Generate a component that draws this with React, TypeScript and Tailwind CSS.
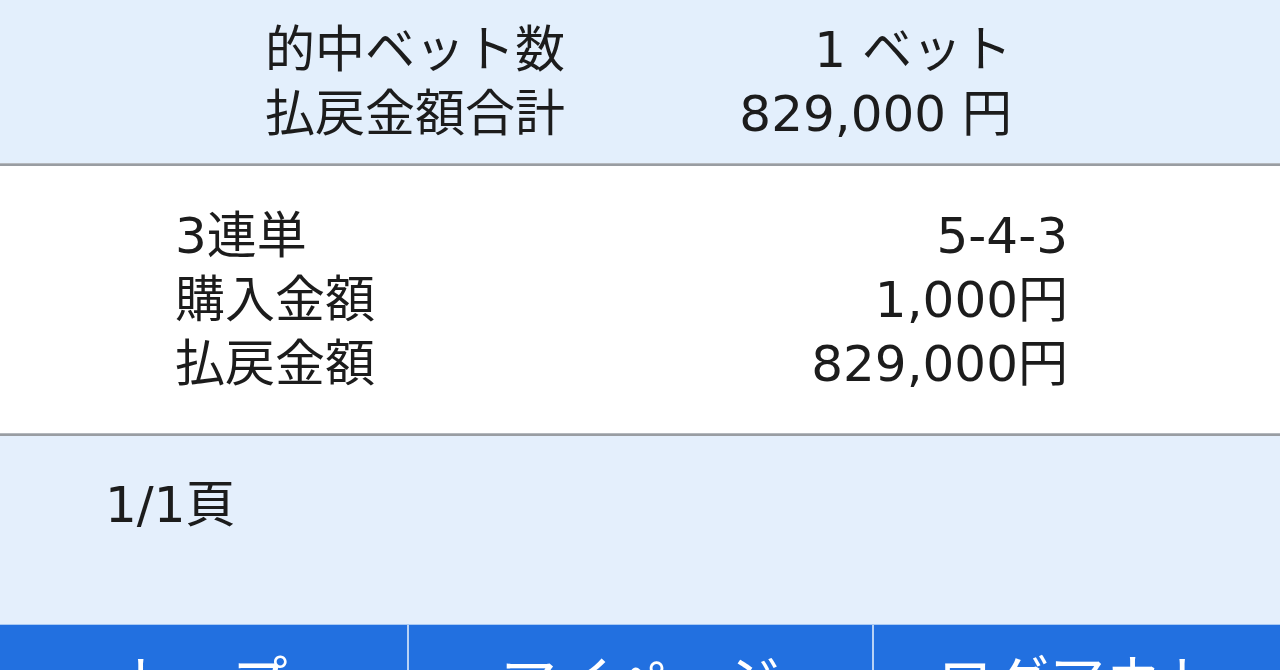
import React from 'react';

const font = "font-['DejaVu_Sans','Noto_Sans_CJK_JP',sans-serif]";

function Divider() {
  return (
    <div className="flex flex-col shrink-0">
      <div className="h-[1px] bg-[#b4b8bd]" />
      <div className="h-[2px] bg-[#999da2]" />
    </div>
  );
}

function Row({ label, value }: { label: string; value: string }) {
  return (
    <div className="flex justify-between leading-[64px] h-[64px] whitespace-nowrap">
      <span>{label}</span>
      <span>{value}</span>
    </div>
  );
}

export default function App() {
  const nav = ['トップ', 'マイページ', 'ログアウト'];
  return (
    <div className={`w-[1280px] h-[670px] overflow-hidden flex flex-col text-[50px] text-[#1c1c1c] ${font}`}>
      {/* summary */}
      <div className="shrink-0 h-[163px] bg-[#e3effc] pt-[18px] pl-[265px]">
        <div className="w-[747px]">
          <Row label="的中ベット数" value="1 ベット" />
          <Row label="払戻金額合計" value="829,000 円" />
        </div>
      </div>
      <Divider />

      {/* bet detail */}
      <div className="shrink-0 h-[267px] bg-white pt-[38px] pl-[175px]">
        <div className="w-[893px]">
          <Row label="3連単" value="5-4-3" />
          <Row label="購入金額" value="1,000円" />
          <Row label="払戻金額" value="829,000円" />
        </div>
      </div>
      <Divider />

      {/* paging */}
      <div className="shrink-0 h-[188px] bg-[#e4effc] pt-[37px] pl-[105px]">
        <div className="leading-[64px] h-[64px]">1/1頁</div>
      </div>

      {/* bottom nav */}
      <div className="shrink-0 h-[60px] overflow-hidden flex bg-[#2270e0] border-t border-[#a9c9f3]">
        {nav.map((n, i) => (
          <div
            key={n}
            className={`${i === 0 ? 'w-[407px]' : i === 1 ? 'w-[465px] border-l-2 border-[#b8d2f5]' : 'flex-1 border-l-2 border-[#b8d2f5]'} flex justify-center pt-[26px] text-white text-[56px] leading-[64px] whitespace-nowrap`}
          >
            {n}
          </div>
        ))}
      </div>
    </div>
  );
}
